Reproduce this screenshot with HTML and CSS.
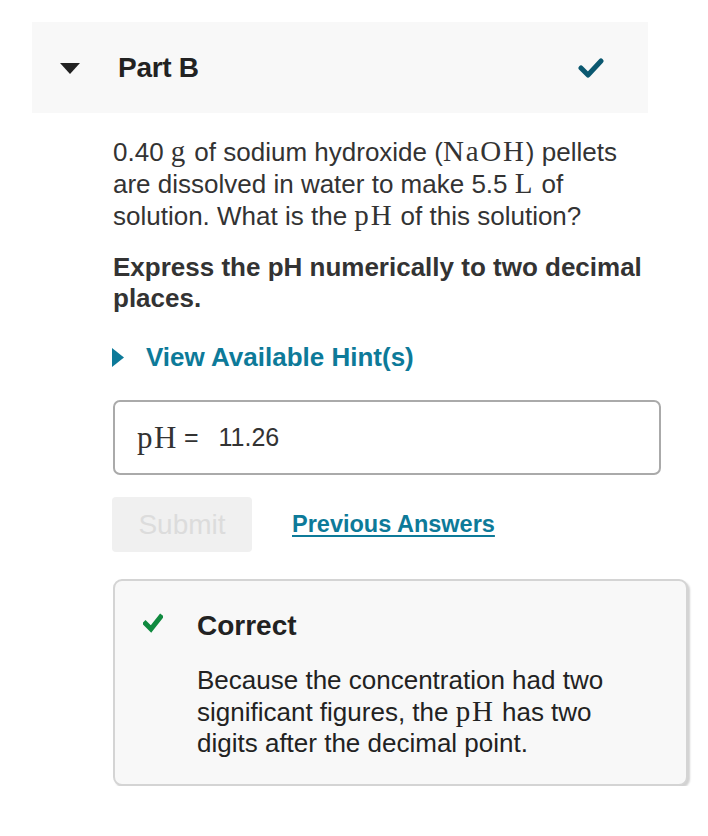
FILE: index.html
```html
<!DOCTYPE html>
<html>
<head>
<meta charset="utf-8">
<link rel="stylesheet" href="styles.css">
</head>
<body>
<div class="page">
  <div class="part-header">
    <svg class="caret-down" width="20" height="11" viewBox="0 0 20 11"><polygon points="0,0 20,0 10,11" fill="#222"/></svg>
    <span class="part-title">Part B</span>
    <svg class="head-check" width="26" height="20" viewBox="0 0 26 20"><polyline points="3,10 10,17 23,3" fill="none" stroke="#0b5870" stroke-width="5" stroke-linecap="round" stroke-linejoin="round"/></svg>
  </div>
  <div class="content">
    <p class="question">0.40 <span class="m">g</span> of sodium hydroxide (<span class="m">NaOH</span>) pellets are dissolved in water to make 5.5 <span class="m">L</span> of solution. What is the <span class="m">pH</span> of this solution?</p>
    <p class="instr">Express the pH numerically to two decimal places.</p>
    <div class="hint">
      <svg class="caret-right" width="12" height="19" viewBox="0 0 12 19"><polygon points="0,0 12,9.5 0,19" fill="#0d7a99"/></svg>
      <span class="hint-text">View Available Hint(s)</span>
    </div>
    <div class="answer-box">
      <span class="m ph">pH</span><span class="eq">=</span><span class="val">11.26</span>
    </div>
    <div class="actions">
      <div class="submit">Submit</div>
      <a class="prev" href="#">Previous Answers</a>
    </div>
    <div class="feedback">
      <svg class="ok-check" width="20" height="20" viewBox="0 0 20 20"><polyline points="2.5,10.5 8,16 17.5,4" fill="none" stroke="#108a3f" stroke-width="5" stroke-linecap="square" stroke-linejoin="miter"/></svg>
      <div class="fb-body">
        <div class="fb-title">Correct</div>
        <p class="fb-text">Because the concentration had two significant figures, the <span class="m">pH</span> has two digits after the decimal point.</p>
      </div>
    </div>
  </div>
</div>
</body>
</html>
```

FILE: styles.css
```css
html, body {
  margin: 0;
  padding: 0;
  background: #fff;
}
body {
  font-family: "Liberation Sans", Arial, Helvetica, sans-serif;
  color: #333;
}
.page {
  width: 708px;
  padding-top: 22px;
}
.part-header {
  margin-left: 32px;
  width: 616px;
  height: 91px;
  background: #f8f8f8;
  display: flex;
  align-items: center;
  box-sizing: border-box;
  padding-left: 28px;
  padding-right: 44px;
}
.caret-down {
  flex: none;
  margin-top: 1px;
}
.part-title {
  font-weight: bold;
  font-size: 28px;
  color: #222;
  margin-left: 38px;
  flex: 1;
  letter-spacing: -0.3px;
}
.head-check {
  flex: none;
}
.content {
  padding-left: 113px;
  width: 549px;
}
.question {
  margin: 23px 0 0 0;
  font-size: 26px;
  line-height: 32px;
  width: 540px;
}
.m {
  font-family: "Liberation Serif", "Times New Roman", serif;
  font-size: 29px;
  line-height: 1;
  letter-spacing: 1.8px;
}
.instr {
  margin: 20px 0 0 0;
  font-size: 26px;
  font-weight: bold;
  line-height: 31px;
  width: 549px;
}
.hint {
  margin-top: 28px;
  display: flex;
  align-items: center;
  height: 30px;
}
.caret-right {
  flex: none;
  margin-left: -1px;
}
.hint-text {
  margin-left: 22px;
  font-weight: bold;
  font-size: 26px;
  color: #0d7a99;
}
.answer-box {
  margin-top: 28px;
  height: 75px;
  width: 548px;
  box-sizing: border-box;
  border: 2px solid #aaa;
  border-radius: 7px;
  display: flex;
  align-items: center;
  padding-left: 22px;
}
.ph {
  font-size: 31px;
  letter-spacing: 1.5px;
}
.eq {
  font-size: 25px;
  margin-left: 6px;
}
.val {
  font-size: 25px;
  margin-left: 20px;
}
.actions {
  margin-top: 22px;
  display: flex;
  align-items: center;
}
.submit {
  width: 140px;
  height: 55px;
  margin-left: -1px;
  background: #f0f0f0;
  border-radius: 4px;
  color: #dcdcdc;
  font-size: 28px;
  display: flex;
  align-items: center;
  justify-content: center;
}
.prev {
  margin-left: 40px;
  font-weight: bold;
  font-size: 23.5px;
  color: #0d7a99;
  text-decoration: underline;
  text-underline-offset: 3px;
  text-decoration-thickness: 2px;
}
.feedback {
  margin-top: 27px;
  width: 575px;
  height: 207px;
  box-sizing: border-box;
  border: 2px solid #d4d4d4;
  border-radius: 9px;
  background: #f8f8f8;
  box-shadow: 2px 2px 2px rgba(0,0,0,0.18);
  display: flex;
  align-items: flex-start;
  padding: 31px 0 0 28px;
}
.ok-check {
  flex: none;
  margin-top: 1px;
}
.fb-body {
  margin-left: 34px;
}
.fb-title {
  font-weight: bold;
  font-size: 28px;
  color: #222;
  line-height: 28px;
}
.fb-text {
  margin: 25px 0 0 0;
  font-size: 26px;
  line-height: 31.5px;
  color: #222;
  width: 420px;
}
```
